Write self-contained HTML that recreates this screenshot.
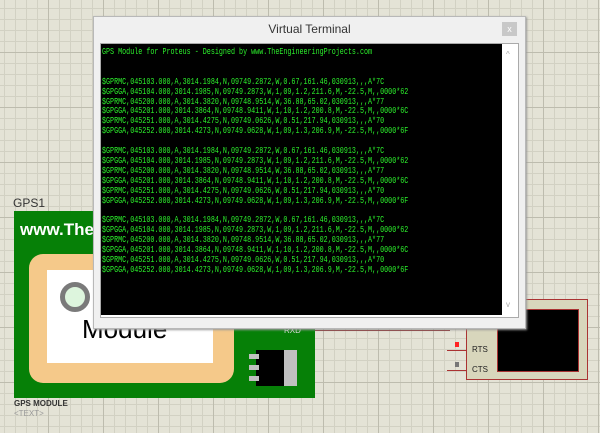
<!DOCTYPE html>
<html><head><style>
body{margin:0;width:600px;height:433px;overflow:hidden;position:relative;font-family:"Liberation Sans",sans-serif;
background-color:#e4e3d6;
background-image:linear-gradient(#bdbcae 1px,transparent 1px),linear-gradient(90deg,#bdbcae 1px,transparent 1px),linear-gradient(#d2d1c3 1px,transparent 1px),linear-gradient(90deg,#d2d1c3 1px,transparent 1px);
background-size:55px 55px,55px 55px,11px 11px,11px 11px;background-position:-7px -3px,-7px -3px,-7px -3px,-7px -3px;}
.a{position:absolute}
.term{position:absolute;left:101px;top:44px;width:401px;height:271px;background:#000;overflow:hidden}
.tx{position:absolute;left:1px;top:3px;color:#2cf02c;font-family:"Liberation Mono",monospace;font-size:9.5px;line-height:9.9px;white-space:pre;transform:scaleX(0.707);transform-origin:0 0}
</style></head><body>
<div class="a" style="left:13px;top:196px;font-size:12px;color:#333">GPS1</div>
<div class="a" style="left:14px;top:211px;width:301px;height:187px;background:#068007"></div>
<div class="a" style="left:20px;top:220px;font-size:17px;font-weight:bold;color:#fff">www.TheE</div>
<div class="a" style="left:29px;top:254px;width:205px;height:129px;background:#f5c98a;border-radius:14px"></div>
<div class="a" style="left:47px;top:270px;width:166px;height:93px;background:#fff"></div>
<div class="a" style="left:60px;top:282px;width:20px;height:20px;border:5px solid #7a7a7a;border-radius:50%;background:#ddf5dd"></div>
<div class="a" style="left:82px;top:314px;font-size:26px;color:#000">Module</div>
<div class="a" style="left:256px;top:350px;width:28px;height:36px;background:#000"></div>
<div class="a" style="left:284px;top:350px;width:13px;height:36px;background:#c0c0c0"></div>
<div class="a" style="left:249px;top:354px;width:10px;height:5px;background:#c0c0c0"></div>
<div class="a" style="left:249px;top:365px;width:10px;height:5px;background:#c0c0c0"></div>
<div class="a" style="left:249px;top:376px;width:10px;height:5px;background:#c0c0c0"></div>
<div class="a" style="left:284px;top:326px;font-size:8px;color:#ddd">RXD</div>
<div class="a" style="left:315px;top:330px;width:135px;height:1px;background:#8b3030"></div>
<div class="a" style="left:14px;top:399px;font-size:8px;font-weight:bold;color:#333">GPS MODULE</div>
<div class="a" style="left:14px;top:409px;font-size:8px;color:#999">&lt;TEXT&gt;</div>
<div class="a" style="left:466px;top:299px;width:120px;height:79px;background:#d8d6bc;border:1px solid #a33"></div>
<div class="a" style="left:497px;top:309px;width:80px;height:61px;background:#000;border:1px solid #a33"></div>
<div class="a" style="left:447px;top:350px;width:19px;height:1px;background:#a33"></div>
<div class="a" style="left:447px;top:370px;width:19px;height:1px;background:#a33"></div>
<div class="a" style="left:455px;top:342px;width:4px;height:5px;background:#f22"></div>
<div class="a" style="left:455px;top:362px;width:4px;height:5px;background:#777"></div>
<div class="a" style="left:472px;top:345px;font-size:8px;color:#222">RTS</div>
<div class="a" style="left:472px;top:365px;font-size:8px;color:#222">CTS</div>
<div class="a" style="left:93px;top:16px;width:431px;height:311px;background:#f0f0f0;border:1px solid #b8b8b8;box-shadow:1px 1px 2px #999"></div>
<div class="a" style="left:93px;top:22px;width:433px;text-align:center;font-size:12px;color:#333">Virtual Terminal</div>
<div class="a" style="left:502px;top:22px;width:15px;height:14px;background:#c8c8c8;color:#fff;font-size:9px;text-align:center;line-height:14px">x</div>
<div class="a" style="left:100px;top:43px;width:417px;height:273px;background:#fff;border:1px solid #aaa"></div>
<div class="a" style="left:506px;top:50px;font-size:8px;color:#aaa">^</div>
<div class="a" style="left:506px;top:300px;font-size:8px;color:#aaa">v</div>
<div class="term"><div class="tx">GPS Module for Proteus - Designed by www.TheEngineeringProjects.com


$GPRMC,045103.000,A,3014.1984,N,09749.2872,W,0.67,161.46,030913,,,A*7C
$GPGGA,045104.000,3014.1985,N,09749.2873,W,1,09,1.2,211.6,M,-22.5,M,,0000*62
$GPRMC,045200.000,A,3014.3820,N,09748.9514,W,36.88,65.02,030913,,,A*77
$GPGGA,045201.000,3014.3864,N,09748.9411,W,1,10,1.2,200.8,M,-22.5,M,,0000*6C
$GPRMC,045251.000,A,3014.4275,N,09749.0626,W,0.51,217.94,030913,,,A*70
$GPGGA,045252.000,3014.4273,N,09749.0628,W,1,09,1.3,206.9,M,-22.5,M,,0000*6F

$GPRMC,045103.000,A,3014.1984,N,09749.2872,W,0.67,161.46,030913,,,A*7C
$GPGGA,045104.000,3014.1985,N,09749.2873,W,1,09,1.2,211.6,M,-22.5,M,,0000*62
$GPRMC,045200.000,A,3014.3820,N,09748.9514,W,36.88,65.02,030913,,,A*77
$GPGGA,045201.000,3014.3864,N,09748.9411,W,1,10,1.2,200.8,M,-22.5,M,,0000*6C
$GPRMC,045251.000,A,3014.4275,N,09749.0626,W,0.51,217.94,030913,,,A*70
$GPGGA,045252.000,3014.4273,N,09749.0628,W,1,09,1.3,206.9,M,-22.5,M,,0000*6F

$GPRMC,045103.000,A,3014.1984,N,09749.2872,W,0.67,161.46,030913,,,A*7C
$GPGGA,045104.000,3014.1985,N,09749.2873,W,1,09,1.2,211.6,M,-22.5,M,,0000*62
$GPRMC,045200.000,A,3014.3820,N,09748.9514,W,36.88,65.02,030913,,,A*77
$GPGGA,045201.000,3014.3864,N,09748.9411,W,1,10,1.2,200.8,M,-22.5,M,,0000*6C
$GPRMC,045251.000,A,3014.4275,N,09749.0626,W,0.51,217.94,030913,,,A*70
$GPGGA,045252.000,3014.4273,N,09749.0628,W,1,09,1.3,206.9,M,-22.5,M,,0000*6F</div></div>
</body></html>
